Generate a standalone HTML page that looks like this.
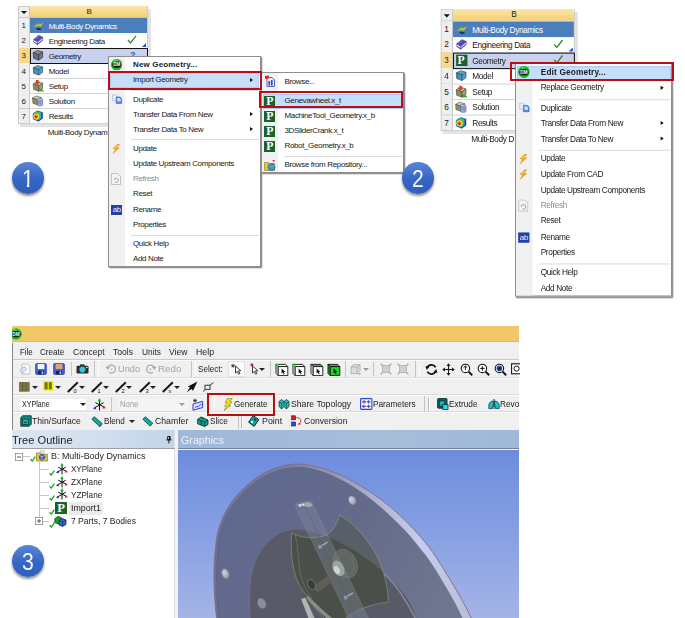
<!DOCTYPE html><html><head><meta charset="utf-8"><title>Geneva wheel import</title><style>
*{box-sizing:border-box;margin:0;padding:0}
html,body{width:685px;height:618px;background:#fff;overflow:hidden}
body{position:relative;font-family:"Liberation Sans","DejaVu Sans",sans-serif;color:#1c1c1c}
.abs{position:absolute}
.t{position:absolute;white-space:nowrap;font-size:8px;letter-spacing:-0.36px;line-height:10px;height:10px;color:#202020}
.grp{position:absolute;left:0;top:0;transform-origin:0 0}
.tbl{position:absolute;background:#fff}
.menu{position:absolute;background:#fff;border:1px solid #8e8e8e;box-shadow:1.4px 1.4px 1.2px rgba(0,0,0,.55)}
.menu .gut{position:absolute;left:0;top:0;bottom:0;width:15.6px;background:#f1f1f1}
.menu .sep{position:absolute;height:1px;background:#dcdcdc}
.hl{position:absolute;background:#c5defb;border:1px solid #aacbf2}
.red{position:absolute;border:2.6px solid #bb0d14}
.arr{position:absolute;width:0;height:0;border-left:3px solid #111;border-top:2.5px solid transparent;border-bottom:2.5px solid transparent}
.badge{position:absolute;width:31.6px;height:31.6px;border-radius:50%;background:linear-gradient(#5a85d6,#3566c4 55%,#2f5fbd);box-shadow:0 2px 2.5px rgba(60,50,30,.55);color:rgba(255,255,255,.95);font-size:24.4px;line-height:33.4px;text-align:center;font-family:"Liberation Sans",sans-serif}
.badge span{display:inline-block;transform:scaleX(.87)}
.pico{position:absolute;background:#17632b;color:#fff;font-family:"Liberation Serif",serif;font-weight:bold;text-align:center}
.app .t{font-size:9.4px;letter-spacing:-0.1px;line-height:12px;height:12px;color:#222}
</style></head><body>
<div class="grp" id="g1">
<div class="abs" style="left:20px;top:9px;width:131.0px;height:117.5px;background:#e3e3e3"></div>
<div class="abs" style="left:18px;top:6px;width:129.5px;height:117.5px;background:#fff;border:1px solid #c9c9c9"></div>
<div class="abs" style="left:18px;top:6px;width:12.4px;height:12.2px;background:#efefef;border:1px solid #c9c9c9"></div>
<div class="abs" style="left:21.2px;top:11px;width:0;height:0;border-top:3.4px solid #111;border-left:3px solid transparent;border-right:3px solid transparent"></div>
<div class="abs" style="left:30.4px;top:6px;width:117.1px;height:12.2px;background:linear-gradient(#fbe6a8,#f4cf72);border-bottom:1px solid #d9c48e"></div>
<div class="t " style="left:86.44999999999999px;top:7.40px;">B</div>
<div class="abs" style="left:18px;top:18.2px;width:12.4px;height:15.400000000000002px;background:#efefef;border:1px solid #c9c9c9;border-top:0"></div>
<div class="t " style="left:21.6px;top:21.45px;">1</div>
<div class="abs" style="left:30.4px;top:18.2px;width:117.1px;height:14.900000000000002px;background:#4a7ebd"></div>
<svg class="abs" style="left:32.2px;top:20.049999999999997px" width="12" height="11" viewBox="0 0 12 11"><ellipse cx="6.9" cy="8.9" rx="2.8" ry="1" fill="#142a66"/><path d="M4.2 1.2L8.4 4 7 5.2 10 9 5.6 6.6 6.8 5.4z" fill="#3fae3a"/><path d="M1 7.2L6 3.6 7 5 11.6 2.4 8.4 7 6.6 5.8z" fill="#f0b322"/><path d="M6.2 4.4l1.4-.6.4 1.6-1.2.6z" fill="#8ccf3a"/></svg>
<div class="t " style="left:48.7px;top:21.55px;color:#fff;">Multi-Body Dynamics</div>
<div class="abs" style="left:18px;top:33.1px;width:12.4px;height:15.5px;background:#efefef;border:1px solid #c9c9c9;border-top:0"></div>
<div class="t " style="left:21.6px;top:36.40px;">2</div>
<div class="abs" style="left:30.4px;top:47.6px;width:117.1px;height:1px;background:#d4d4d4"></div>
<svg class="abs" style="left:32.2px;top:35.0px" width="12" height="11" viewBox="0 0 12 11"><path d="M1.6 4.5L5.5 6.85V9.6L1.6 7.2z" fill="#f4f4fb" stroke="#4a44a8" stroke-width=".5"/><path d="M5.5 6.85L10.9 2.35V5L5.5 9.6z" fill="#e4e4f4" stroke="#3d3898" stroke-width=".5"/><path d="M1.7 6.9l3.8 2.4 5.3-4.5" fill="none" stroke="#3d3898" stroke-width=".9"/><path d="M1.6 4.5L6.7 .25 10.9 2.35 5.5 6.85z" fill="#4f48c0" stroke="#3a3496" stroke-width=".5"/><path d="M3.4 4L7 1.2" stroke="#7f78e4" stroke-width=".8"/></svg>
<div class="t " style="left:48.7px;top:36.50px;">Engineering Data</div>
<div class="abs" style="left:18px;top:48.1px;width:12.4px;height:15.600000000000001px;background:#f6d98a;border:1px solid #c9c9c9;border-top:0"></div>
<div class="t " style="left:21.6px;top:51.45px;">3</div>
<div class="abs" style="left:30.4px;top:47.6px;width:117.6px;height:16.1px;background:#c8d1ee;border:1.2px solid #111"></div>
<svg class="abs" style="left:32.2px;top:50.050000000000004px" width="12" height="11" viewBox="0 0 12 11"><g stroke="#2e2f31" stroke-width="0.7" stroke-linejoin="round"><path d="M1.2 2.7L5.5 .4 10.6 2 6.7 4.7z" fill="#8d8f92"/><path d="M1.2 2.7L6.7 4.7V10.1L1.6 8.2z" fill="#6c6e71"/><path d="M6.7 4.7L10.6 2V7.4L6.7 10.1z" fill="#77797c"/></g></svg>
<div class="t " style="left:48.7px;top:51.55px;">Geometry</div>
<div class="abs" style="left:18px;top:63.2px;width:12.4px;height:15.599999999999994px;background:#efefef;border:1px solid #c9c9c9;border-top:0"></div>
<div class="t " style="left:21.6px;top:66.55px;">4</div>
<div class="abs" style="left:30.4px;top:77.8px;width:117.1px;height:1px;background:#d4d4d4"></div>
<svg class="abs" style="left:32.2px;top:65.15px" width="12" height="11" viewBox="0 0 12 11"><g stroke="#1d4f6c" stroke-width="0.6" stroke-linejoin="round"><path d="M1.2 2.7L5.5 .4 10.6 2 6.7 4.7z" fill="#4d93b8"/><path d="M1.2 2.7L6.7 4.7V10.1L1.6 8.2z" fill="#2f739a"/><path d="M6.7 4.7L10.6 2V7.4L6.7 10.1z" fill="#3a80a6"/></g><path d="M3 1.8l5.6 1.9M4.4 1l5.4 1.8M3.8 3.7v5.4M8 3.9v5.4M9.4 2.9v5.4M1.4 4.6l5.3 2 3.9-2.7M1.5 6.5l5.2 1.9 3.9-2.7M5.2 4.2v5.4" stroke="#8cc4e0" stroke-width=".35" fill="none"/></svg>
<div class="t " style="left:48.7px;top:66.65px;">Model</div>
<div class="abs" style="left:18px;top:78.3px;width:12.4px;height:15.600000000000009px;background:#efefef;border:1px solid #c9c9c9;border-top:0"></div>
<div class="t " style="left:21.6px;top:81.65px;">5</div>
<div class="abs" style="left:30.4px;top:92.9px;width:117.1px;height:1px;background:#d4d4d4"></div>
<svg class="abs" style="left:32.2px;top:80.25px" width="12" height="12" viewBox="0 0 12 12"><g transform="translate(0,1.2)"><g stroke="#4c4832" stroke-width="0.6" stroke-linejoin="round"><path d="M1.2 2.7L5.5 .4 10.6 2 6.7 4.7z" fill="#cfc8a6"/><path d="M1.2 2.7L6.7 4.7V10.1L1.6 8.2z" fill="#8e8868"/><path d="M6.7 4.7L10.6 2V7.4L6.7 10.1z" fill="#a39c7a"/></g></g><path d="M4 0h2.4v2.2h1.2L5.2 5 2.8 2.2H4z" fill="#dc4a22" stroke="#9a2a0c" stroke-width=".3"/><path d="M7 8.6l1.6 2.2 1-1 1.8 1.6" stroke="#2aa81e" stroke-width="1.4" fill="none"/></svg>
<div class="t " style="left:48.7px;top:81.75px;">Setup</div>
<div class="abs" style="left:18px;top:93.4px;width:12.4px;height:15.599999999999994px;background:#efefef;border:1px solid #c9c9c9;border-top:0"></div>
<div class="t " style="left:21.6px;top:96.75px;">6</div>
<div class="abs" style="left:30.4px;top:108.0px;width:117.1px;height:1px;background:#d4d4d4"></div>
<svg class="abs" style="left:32.2px;top:95.35000000000001px" width="12" height="12" viewBox="0 0 12 12"><g transform="translate(-.6,.6) scale(.92)"><g stroke="#4c4832" stroke-width="0.6" stroke-linejoin="round"><path d="M1.2 2.7L5.5 .4 10.6 2 6.7 4.7z" fill="#cfc8a6"/><path d="M1.2 2.7L6.7 4.7V10.1L1.6 8.2z" fill="#928c6c"/><path d="M6.7 4.7L10.6 2V7.4L6.7 10.1z" fill="#a8a180"/></g></g><path d="M5.4 4.4c0-1.2 5.2-1.2 5.2 0v5.6c0 1.2-5.2 1.2-5.2 0z" fill="#94aee2" stroke="#4b68b4" stroke-width=".6"/><ellipse cx="8" cy="4.4" rx="2.6" ry=".9" fill="#c4d4f4" stroke="#4b68b4" stroke-width=".4"/><path d="M6.4 6.6h3.2M6.4 8.2h3.2" stroke="#d8607a" stroke-width=".8"/></svg>
<div class="t " style="left:48.7px;top:96.85px;">Solution</div>
<div class="abs" style="left:18px;top:108.5px;width:12.4px;height:15.5px;background:#efefef;border:1px solid #c9c9c9;border-top:0"></div>
<div class="t " style="left:21.6px;top:111.80px;">7</div>
<div class="abs" style="left:30.4px;top:123.0px;width:117.1px;height:1px;background:#d4d4d4"></div>
<svg class="abs" style="left:32.2px;top:110.4px" width="12" height="12" viewBox="0 0 12 12"><path d="M1 3.6L5.6 .8l5 1.6v6L6.4 11.4 1.2 9z" fill="#2438d0" stroke="#1a2a90" stroke-width=".4"/><path d="M1.2 3.8L5.6 1.2l3.6 1.2v5.8L6 10.6 1.4 8.6z" fill="#22b6c6"/><path d="M1.3 4L5.4 1.8l2.6 1v5L5.6 10 1.5 8.2z" fill="#3cc83a"/><ellipse cx="4.4" cy="6.4" rx="2.9" ry="3" fill="#f2e22a"/><ellipse cx="4.2" cy="6.6" rx="2" ry="2.1" fill="#f08a1c"/><ellipse cx="4.1" cy="6.8" rx="1.2" ry="1.3" fill="#dc1c1c"/></svg>
<div class="t " style="left:48.7px;top:111.90px;">Results</div>
<svg class="abs" style="left:127px;top:35.300000000000004px" width="10" height="9" viewBox="0 0 10 9"><path d="M1 5l2.5 3L9 .8" fill="none" stroke="#3d8a2a" stroke-width="1.3"/></svg>
<div class="abs" style="left:141.5px;top:42.6px;width:0;height:0;border-bottom:4px solid #2448d8;border-left:4px solid transparent"></div>
<div class="t" style="left:130px;top:50px;color:#2a5fd0;font-weight:bold;font-size:9px">?</div>
<div class="t " style="left:47.7px;top:127.60px;">Multi-Body Dynam</div>
<div class="menu" style="left:108.1px;top:55.7px;width:152.7px;height:210.9px"><div class="gut"></div>
<svg class="abs" style="left:2.0px;top:2.2px" width="11.4" height="11.4" viewBox="0 0 16 16"><circle cx="8" cy="8" r="7.7" fill="#12c41e"/><circle cx="8" cy="8" r="7.7" fill="none" stroke="#0a8a14" stroke-width=".6"/><circle cx="6.6" cy="3.4" r="2.2" fill="#6cf070" opacity=".7"/><ellipse cx="8" cy="8.2" rx="6.3" ry="4.6" fill="#1a1f1a"/><text x="8" y="10.5" font-size="6.4" font-weight="bold" text-anchor="middle" fill="#f4fff4" font-family="Liberation Sans, sans-serif">DM</text></svg>
<div class="t " style="left:23.9px;top:3.80px;font-weight:bold;letter-spacing:0.15px;">New Geometry...</div>
<div class="hl" style="left:0.5px;right:0.5px;top:16.7px;height:14.6px"></div>
<div class="t " style="left:23.9px;top:18.60px;">Import Geometry</div>
<div class="arr" style="left:140.7px;top:21.1px"></div>
<div class="sep" style="left:22px;right:1px;top:32.9px"></div>
<svg class="abs" style="left:2.8000000000000003px;top:37.400000000000006px" width="11" height="10" viewBox="0 0 11 10"><path d="M.5 .8h3.4l1.3 1.3v4.6H.5z" fill="#e3edfc" stroke="#a3bde6" stroke-width=".7"/><path d="M4.2 3h3.8l1.6 1.6v4.8H4.2z" fill="#5c8fe2" stroke="#3a6ccc" stroke-width=".7"/><path d="M5.2 4h2.2l1.2 1.2v2H5.2z" fill="#cfe0fa"/></svg>
<div class="t " style="left:23.9px;top:38.20px;">Duplicate</div>
<div class="t " style="left:23.9px;top:53.30px;">Transfer Data From New</div>
<div class="arr" style="left:140.7px;top:55.8px"></div>
<div class="t " style="left:23.9px;top:68.20px;">Transfer Data To New</div>
<div class="arr" style="left:140.7px;top:70.7px"></div>
<div class="sep" style="left:22px;right:1px;top:82.6px"></div>
<svg class="abs" style="left:3.4000000000000004px;top:87.2px" width="8" height="10" viewBox="0 0 8 10"><polygon points="5.6,0 .8,4.6 3.4,5 1,9.6 7.4,3.8 4.6,3.4 7.8,0" fill="#f2a51a" stroke="#d88a0a" stroke-width=".4"/><polygon points="5.6,.6 2.4,4 4,4.2" fill="#ffe060"/></svg>
<div class="t " style="left:23.9px;top:87.40px;">Update</div>
<div class="t " style="left:23.9px;top:102.50px;">Update Upstream Components</div>
<svg class="abs" style="left:2.2px;top:116.3px" width="10" height="12" viewBox="0 0 10 12"><path d="M.5 .5h6l3 3v8h-9z" fill="#f4f4f4" stroke="#b4b4b4" stroke-width=".8"/><path d="M3 7a2.2 2.2 0 1 1 1 2.2" fill="none" stroke="#a9a9a9" stroke-width="1"/></svg>
<div class="t " style="left:23.9px;top:117.70px;color:#8c8c8c;">Refresh</div>
<div class="t " style="left:23.9px;top:132.80px;">Reset</div>
<div class="abs" style="left:2.2px;top:147.9px;width:11px;height:10.6px;background:#2240a6;color:#f0f4ff;font-size:7.8px;line-height:9.6px;text-align:center;letter-spacing:-.3px">ab</div>
<div class="t " style="left:23.9px;top:147.90px;">Rename</div>
<div class="t " style="left:23.9px;top:162.90px;">Properties</div>
<div class="sep" style="left:22px;right:1px;top:177.9px"></div>
<div class="t " style="left:23.9px;top:181.90px;">Quick Help</div>
<div class="t " style="left:23.9px;top:197.10px;">Add Note</div>
</div>
<div class="menu" style="left:261.3px;top:72.4px;width:142.5px;height:100.6px"><div class="gut"></div>
<svg class="abs" style="left:2px;top:2.0999999999999996px" width="12" height="12" viewBox="0 0 12 12"><path d="M3 2.5h5l2.5 2.5v6.5h-7.5z" fill="#e8eefc" stroke="#3c55b8" stroke-width=".9"/><rect x="4.5" y="6" width="1.6" height="4.5" fill="#2b49c0"/><rect x="7" y="5" width="1.6" height="5.5" fill="#2b49c0"/><path d="M1 1l4-.5v3l-4 .5z" fill="#d8262c"/></svg>
<div class="t " style="left:22.2px;top:3.50px;">Browse...</div>
<div class="hl" style="left:0.5px;right:0.5px;top:20.8px;height:14.6px"></div>
<div class="pico" style="left:2px;top:22.499999999999996px;width:11.2px;height:11.2px;font-size:11.8px;line-height:11.4px">P</div>
<div class="t " style="left:22.2px;top:22.70px;">Genevawheel.x_t</div>
<div class="pico" style="left:2px;top:37.2px;width:11.2px;height:11.2px;font-size:11.8px;line-height:11.4px">P</div>
<div class="t " style="left:22.2px;top:37.40px;">MachineTool_Geometry.x_b</div>
<div class="pico" style="left:2px;top:52.300000000000004px;width:11.2px;height:11.2px;font-size:11.8px;line-height:11.4px">P</div>
<div class="t " style="left:22.2px;top:52.50px;">3DSliderCrank.x_t</div>
<div class="pico" style="left:2px;top:67.39999999999999px;width:11.2px;height:11.2px;font-size:11.8px;line-height:11.4px">P</div>
<div class="t " style="left:22.2px;top:67.60px;">Robot_Geometry.x_b</div>
<div class="sep" style="left:22px;right:1px;top:82.5px"></div>
<svg class="abs" style="left:2px;top:85.6px" width="12" height="12" viewBox="0 0 12 12"><path d="M.5 3.5h4l1 1h5v7h-10z" fill="#e8c24a" stroke="#a98312" stroke-width=".7"/><circle cx="7.5" cy="8" r="3.6" fill="#3f8fe0" stroke="#1d5fb0" stroke-width=".6"/><path d="M5.5 7c1 .2 1.5 1.2 2.5 1s1.4-1.8 2.6-1.4" stroke="#48c24e" stroke-width="1.3" fill="none"/><path d="M8 1.5l2.5-.8v2.2z" fill="#d02020"/></svg>
<div class="t " style="left:22.2px;top:87.00px;">Browse from Repository...</div>
</div>
<div class="red" style="left:107.6px;top:70.8px;width:154.2px;height:19px"></div>
<div class="red" style="left:258.6px;top:90.9px;width:144.4px;height:17.6px"></div>
</div>
<div class="grp" id="g2" style="left:422px;top:2.7px;transform:scale(1.033)">
<div class="abs" style="left:20px;top:9px;width:131.0px;height:117.5px;background:#e3e3e3"></div>
<div class="abs" style="left:18px;top:6px;width:129.5px;height:117.5px;background:#fff;border:1px solid #c9c9c9"></div>
<div class="abs" style="left:18px;top:6px;width:12.4px;height:12.2px;background:#efefef;border:1px solid #c9c9c9"></div>
<div class="abs" style="left:21.2px;top:11px;width:0;height:0;border-top:3.4px solid #111;border-left:3px solid transparent;border-right:3px solid transparent"></div>
<div class="abs" style="left:30.4px;top:6px;width:117.1px;height:12.2px;background:linear-gradient(#fbe6a8,#f4cf72);border-bottom:1px solid #d9c48e"></div>
<div class="t " style="left:86.44999999999999px;top:7.40px;">B</div>
<div class="abs" style="left:18px;top:18.2px;width:12.4px;height:15.400000000000002px;background:#efefef;border:1px solid #c9c9c9;border-top:0"></div>
<div class="t " style="left:21.6px;top:21.45px;">1</div>
<div class="abs" style="left:30.4px;top:18.2px;width:117.1px;height:14.900000000000002px;background:#4a7ebd"></div>
<svg class="abs" style="left:32.2px;top:20.049999999999997px" width="12" height="11" viewBox="0 0 12 11"><ellipse cx="6.9" cy="8.9" rx="2.8" ry="1" fill="#142a66"/><path d="M4.2 1.2L8.4 4 7 5.2 10 9 5.6 6.6 6.8 5.4z" fill="#3fae3a"/><path d="M1 7.2L6 3.6 7 5 11.6 2.4 8.4 7 6.6 5.8z" fill="#f0b322"/><path d="M6.2 4.4l1.4-.6.4 1.6-1.2.6z" fill="#8ccf3a"/></svg>
<div class="t " style="left:48.7px;top:21.55px;color:#fff;">Multi-Body Dynamics</div>
<div class="abs" style="left:18px;top:33.1px;width:12.4px;height:15.5px;background:#efefef;border:1px solid #c9c9c9;border-top:0"></div>
<div class="t " style="left:21.6px;top:36.40px;">2</div>
<div class="abs" style="left:30.4px;top:47.6px;width:117.1px;height:1px;background:#d4d4d4"></div>
<svg class="abs" style="left:32.2px;top:35.0px" width="12" height="11" viewBox="0 0 12 11"><path d="M1.6 4.5L5.5 6.85V9.6L1.6 7.2z" fill="#f4f4fb" stroke="#4a44a8" stroke-width=".5"/><path d="M5.5 6.85L10.9 2.35V5L5.5 9.6z" fill="#e4e4f4" stroke="#3d3898" stroke-width=".5"/><path d="M1.7 6.9l3.8 2.4 5.3-4.5" fill="none" stroke="#3d3898" stroke-width=".9"/><path d="M1.6 4.5L6.7 .25 10.9 2.35 5.5 6.85z" fill="#4f48c0" stroke="#3a3496" stroke-width=".5"/><path d="M3.4 4L7 1.2" stroke="#7f78e4" stroke-width=".8"/></svg>
<div class="t " style="left:48.7px;top:36.50px;">Engineering Data</div>
<div class="abs" style="left:18px;top:48.1px;width:12.4px;height:15.600000000000001px;background:#f6d98a;border:1px solid #c9c9c9;border-top:0"></div>
<div class="t " style="left:21.6px;top:51.45px;">3</div>
<div class="abs" style="left:30.4px;top:47.6px;width:117.6px;height:16.1px;background:#c8d1ee;border:1.2px solid #111"></div>
<div class="pico" style="left:32.5px;top:50.25000000000001px;width:11px;height:11px;font-size:11.6px;line-height:11.2px">P</div>
<div class="t " style="left:48.7px;top:51.55px;">Geometry</div>
<div class="abs" style="left:18px;top:63.2px;width:12.4px;height:15.599999999999994px;background:#efefef;border:1px solid #c9c9c9;border-top:0"></div>
<div class="t " style="left:21.6px;top:66.55px;">4</div>
<div class="abs" style="left:30.4px;top:77.8px;width:117.1px;height:1px;background:#d4d4d4"></div>
<svg class="abs" style="left:32.2px;top:65.15px" width="12" height="11" viewBox="0 0 12 11"><g stroke="#1d4f6c" stroke-width="0.6" stroke-linejoin="round"><path d="M1.2 2.7L5.5 .4 10.6 2 6.7 4.7z" fill="#4d93b8"/><path d="M1.2 2.7L6.7 4.7V10.1L1.6 8.2z" fill="#2f739a"/><path d="M6.7 4.7L10.6 2V7.4L6.7 10.1z" fill="#3a80a6"/></g><path d="M3 1.8l5.6 1.9M4.4 1l5.4 1.8M3.8 3.7v5.4M8 3.9v5.4M9.4 2.9v5.4M1.4 4.6l5.3 2 3.9-2.7M1.5 6.5l5.2 1.9 3.9-2.7M5.2 4.2v5.4" stroke="#8cc4e0" stroke-width=".35" fill="none"/></svg>
<div class="t " style="left:48.7px;top:66.65px;">Model</div>
<div class="abs" style="left:18px;top:78.3px;width:12.4px;height:15.600000000000009px;background:#efefef;border:1px solid #c9c9c9;border-top:0"></div>
<div class="t " style="left:21.6px;top:81.65px;">5</div>
<div class="abs" style="left:30.4px;top:92.9px;width:117.1px;height:1px;background:#d4d4d4"></div>
<svg class="abs" style="left:32.2px;top:80.25px" width="12" height="12" viewBox="0 0 12 12"><g transform="translate(0,1.2)"><g stroke="#4c4832" stroke-width="0.6" stroke-linejoin="round"><path d="M1.2 2.7L5.5 .4 10.6 2 6.7 4.7z" fill="#cfc8a6"/><path d="M1.2 2.7L6.7 4.7V10.1L1.6 8.2z" fill="#8e8868"/><path d="M6.7 4.7L10.6 2V7.4L6.7 10.1z" fill="#a39c7a"/></g></g><path d="M4 0h2.4v2.2h1.2L5.2 5 2.8 2.2H4z" fill="#dc4a22" stroke="#9a2a0c" stroke-width=".3"/><path d="M7 8.6l1.6 2.2 1-1 1.8 1.6" stroke="#2aa81e" stroke-width="1.4" fill="none"/></svg>
<div class="t " style="left:48.7px;top:81.75px;">Setup</div>
<div class="abs" style="left:18px;top:93.4px;width:12.4px;height:15.599999999999994px;background:#efefef;border:1px solid #c9c9c9;border-top:0"></div>
<div class="t " style="left:21.6px;top:96.75px;">6</div>
<div class="abs" style="left:30.4px;top:108.0px;width:117.1px;height:1px;background:#d4d4d4"></div>
<svg class="abs" style="left:32.2px;top:95.35000000000001px" width="12" height="12" viewBox="0 0 12 12"><g transform="translate(-.6,.6) scale(.92)"><g stroke="#4c4832" stroke-width="0.6" stroke-linejoin="round"><path d="M1.2 2.7L5.5 .4 10.6 2 6.7 4.7z" fill="#cfc8a6"/><path d="M1.2 2.7L6.7 4.7V10.1L1.6 8.2z" fill="#928c6c"/><path d="M6.7 4.7L10.6 2V7.4L6.7 10.1z" fill="#a8a180"/></g></g><path d="M5.4 4.4c0-1.2 5.2-1.2 5.2 0v5.6c0 1.2-5.2 1.2-5.2 0z" fill="#94aee2" stroke="#4b68b4" stroke-width=".6"/><ellipse cx="8" cy="4.4" rx="2.6" ry=".9" fill="#c4d4f4" stroke="#4b68b4" stroke-width=".4"/><path d="M6.4 6.6h3.2M6.4 8.2h3.2" stroke="#d8607a" stroke-width=".8"/></svg>
<div class="t " style="left:48.7px;top:96.85px;">Solution</div>
<div class="abs" style="left:18px;top:108.5px;width:12.4px;height:15.5px;background:#efefef;border:1px solid #c9c9c9;border-top:0"></div>
<div class="t " style="left:21.6px;top:111.80px;">7</div>
<div class="abs" style="left:30.4px;top:123.0px;width:117.1px;height:1px;background:#d4d4d4"></div>
<svg class="abs" style="left:32.2px;top:110.4px" width="12" height="12" viewBox="0 0 12 12"><path d="M1 3.6L5.6 .8l5 1.6v6L6.4 11.4 1.2 9z" fill="#2438d0" stroke="#1a2a90" stroke-width=".4"/><path d="M1.2 3.8L5.6 1.2l3.6 1.2v5.8L6 10.6 1.4 8.6z" fill="#22b6c6"/><path d="M1.3 4L5.4 1.8l2.6 1v5L5.6 10 1.5 8.2z" fill="#3cc83a"/><ellipse cx="4.4" cy="6.4" rx="2.9" ry="3" fill="#f2e22a"/><ellipse cx="4.2" cy="6.6" rx="2" ry="2.1" fill="#f08a1c"/><ellipse cx="4.1" cy="6.8" rx="1.2" ry="1.3" fill="#dc1c1c"/></svg>
<div class="t " style="left:48.7px;top:111.90px;">Results</div>
<svg class="abs" style="left:127px;top:35.300000000000004px" width="10" height="9" viewBox="0 0 10 9"><path d="M1 5l2.5 3L9 .8" fill="none" stroke="#3d8a2a" stroke-width="1.3"/></svg>
<div class="abs" style="left:141.5px;top:42.6px;width:0;height:0;border-bottom:4px solid #2448d8;border-left:4px solid transparent"></div>
<svg class="abs" style="left:127px;top:50.1px" width="10" height="9" viewBox="0 0 10 9"><path d="M1 5l2.5 3L9 .8" fill="none" stroke="#4f7a3a" stroke-width="1.3"/></svg>
<div class="t " style="left:47.7px;top:127.60px;">Multi-Body D</div>
</div>
<div class="grp" id="g2m" style="left:515.4px;top:62.2px;transform:scale(1.033)">
<div class="menu" style="left:0px;top:0px;width:152.3px;height:227.4px"><div class="gut"></div>
<div class="hl" style="left:0.5px;right:0.5px;top:2.9px;height:14.6px"></div>
<svg class="abs" style="left:2.0px;top:3.2px" width="11.4" height="11.4" viewBox="0 0 16 16"><circle cx="8" cy="8" r="7.7" fill="#12c41e"/><circle cx="8" cy="8" r="7.7" fill="none" stroke="#0a8a14" stroke-width=".6"/><circle cx="6.6" cy="3.4" r="2.2" fill="#6cf070" opacity=".7"/><ellipse cx="8" cy="8.2" rx="6.3" ry="4.6" fill="#1a1f1a"/><text x="8" y="10.5" font-size="6.4" font-weight="bold" text-anchor="middle" fill="#f4fff4" font-family="Liberation Sans, sans-serif">DM</text></svg>
<div class="t " style="left:23.9px;top:4.80px;font-weight:bold;letter-spacing:0.15px;">Edit Geometry...</div>
<div class="t " style="left:23.9px;top:19.30px;">Replace Geometry</div>
<div class="arr" style="left:140.3px;top:21.8px"></div>
<div class="sep" style="left:22px;right:1px;top:34.7px"></div>
<svg class="abs" style="left:2.8000000000000003px;top:38.0px" width="11" height="10" viewBox="0 0 11 10"><path d="M.5 .8h3.4l1.3 1.3v4.6H.5z" fill="#e3edfc" stroke="#a3bde6" stroke-width=".7"/><path d="M4.2 3h3.8l1.6 1.6v4.8H4.2z" fill="#5c8fe2" stroke="#3a6ccc" stroke-width=".7"/><path d="M5.2 4h2.2l1.2 1.2v2H5.2z" fill="#cfe0fa"/></svg>
<div class="t " style="left:23.9px;top:38.80px;">Duplicate</div>
<div class="t " style="left:23.9px;top:53.80px;">Transfer Data From New</div>
<div class="arr" style="left:140.3px;top:56.3px"></div>
<div class="t " style="left:23.9px;top:68.90px;">Transfer Data To New</div>
<div class="arr" style="left:140.3px;top:71.4px"></div>
<div class="sep" style="left:22px;right:1px;top:83.8px"></div>
<svg class="abs" style="left:3.4000000000000004px;top:88.0px" width="8" height="10" viewBox="0 0 8 10"><polygon points="5.6,0 .8,4.6 3.4,5 1,9.6 7.4,3.8 4.6,3.4 7.8,0" fill="#f2a51a" stroke="#d88a0a" stroke-width=".4"/><polygon points="5.6,.6 2.4,4 4,4.2" fill="#ffe060"/></svg>
<div class="t " style="left:23.9px;top:88.20px;">Update</div>
<svg class="abs" style="left:3.4000000000000004px;top:102.89999999999999px" width="8" height="10" viewBox="0 0 8 10"><polygon points="5.6,0 .8,4.6 3.4,5 1,9.6 7.4,3.8 4.6,3.4 7.8,0" fill="#f2a51a" stroke="#d88a0a" stroke-width=".4"/><polygon points="5.6,.6 2.4,4 4,4.2" fill="#ffe060"/></svg>
<div class="t " style="left:23.9px;top:103.10px;">Update From CAD</div>
<div class="t " style="left:23.9px;top:118.50px;">Update Upstream Components</div>
<svg class="abs" style="left:2.2px;top:131.79999999999998px" width="10" height="12" viewBox="0 0 10 12"><path d="M.5 .5h6l3 3v8h-9z" fill="#f4f4f4" stroke="#b4b4b4" stroke-width=".8"/><path d="M3 7a2.2 2.2 0 1 1 1 2.2" fill="none" stroke="#a9a9a9" stroke-width="1"/></svg>
<div class="t " style="left:23.9px;top:133.20px;color:#8c8c8c;">Refresh</div>
<div class="t " style="left:23.9px;top:148.40px;">Reset</div>
<div class="abs" style="left:2.2px;top:163.5px;width:11px;height:10.6px;background:#2240a6;color:#f0f4ff;font-size:7.8px;line-height:9.6px;text-align:center;letter-spacing:-.3px">ab</div>
<div class="t " style="left:23.9px;top:163.50px;">Rename</div>
<div class="t " style="left:23.9px;top:178.90px;">Properties</div>
<div class="sep" style="left:22px;right:1px;top:193.5px"></div>
<div class="t " style="left:23.9px;top:198.30px;">Quick Help</div>
<div class="t " style="left:23.9px;top:213.70px;">Add Note</div>
</div>
</div>
<div class="red" style="left:509.6px;top:61.6px;width:164.6px;height:19.4px"></div>
<div class="badge" style="left:12.2px;top:162.4px"><span style="clip-path:polygon(0 0,100% 0,100% 65.5%,63.5% 65.5%,63.5% 100%,42% 100%,42% 65.5%,0 65.5%)">1</span></div>
<div class="badge" style="left:402px;top:162.4px"><span>2</span></div>
<div class="abs" style="left:12px;top:326.6px;width:507px;height:291.4px;background:#f0f0f0"></div>
<div class="abs" style="left:12px;top:326.4px;width:507px;height:16px;background:#f0c869;border-bottom:1px solid #e7b952"></div>
<svg class="abs" style="left:10.4px;top:328.4px" width="12" height="12" viewBox="0 0 16 16"><circle cx="8" cy="8" r="7.7" fill="#12c41e"/><circle cx="6.6" cy="3.4" r="2.2" fill="#6cf070" opacity=".7"/><ellipse cx="8" cy="8.2" rx="6.3" ry="4.6" fill="#1a1f1a"/><text x="8" y="10.5" font-size="6.4" font-weight="bold" text-anchor="middle" fill="#f4fff4" font-family="Liberation Sans, sans-serif">DM</text></svg>
<div class="abs" style="left:0;top:326px;width:12px;height:20px;background:#fff"></div>
<div class="abs" style="left:12px;top:343px;width:1px;height:87px;background:#8a8a8a"></div>
<div class="abs" style="left:13px;top:360.2px;width:506px;height:1px;background:#fafafa"></div>
<div class="abs" style="left:13px;top:359.2px;width:506px;height:1px;background:#c9c9c9"></div>
<div class="abs" style="left:13px;top:377.8px;width:506px;height:1px;background:#fafafa"></div>
<div class="abs" style="left:13px;top:376.8px;width:506px;height:1px;background:#dcdcdc"></div>
<div class="abs" style="left:13px;top:395px;width:506px;height:1px;background:#fafafa"></div>
<div class="abs" style="left:13px;top:394px;width:506px;height:1px;background:#dcdcdc"></div>
<div class="abs" style="left:13px;top:412.4px;width:506px;height:1px;background:#fafafa"></div>
<div class="abs" style="left:13px;top:411.4px;width:506px;height:1px;background:#dcdcdc"></div>
<div class="abs" style="left:19.5px;top:345.80px;height:12px;line-height:12px;font-size:9.8px;white-space:nowrap;color:#222;transform:scaleX(0.804);transform-origin:0 50%;">File</div>
<div class="abs" style="left:40.4px;top:345.80px;height:12px;line-height:12px;font-size:9.8px;white-space:nowrap;color:#222;transform:scaleX(0.8264);transform-origin:0 50%;">Create</div>
<div class="abs" style="left:73px;top:345.80px;height:12px;line-height:12px;font-size:9.8px;white-space:nowrap;color:#222;transform:scaleX(0.8658);transform-origin:0 50%;">Concept</div>
<div class="abs" style="left:113.4px;top:345.80px;height:12px;line-height:12px;font-size:9.8px;white-space:nowrap;color:#222;transform:scaleX(0.8699);transform-origin:0 50%;">Tools</div>
<div class="abs" style="left:141.7px;top:345.80px;height:12px;line-height:12px;font-size:9.8px;white-space:nowrap;color:#222;transform:scaleX(0.8509);transform-origin:0 50%;">Units</div>
<div class="abs" style="left:169.3px;top:345.80px;height:12px;line-height:12px;font-size:9.8px;white-space:nowrap;color:#222;transform:scaleX(0.8736);transform-origin:0 50%;">View</div>
<div class="abs" style="left:195.8px;top:345.80px;height:12px;line-height:12px;font-size:9.8px;white-space:nowrap;color:#222;transform:scaleX(0.898);transform-origin:0 50%;">Help</div>
<svg class="abs" style="left:18.5px;top:363.3px" width="12" height="12" viewBox="0 0 12 12"><path d="M3 1h5.5L11 3.5V11H3z" fill="#fbfbfb" stroke="#a8a8a8" stroke-width=".7"/><path d="M1 7.2l4.5-3.6 2.4 2.6-4.6 3.6z" fill="#dfe3f7" stroke="#8d93c6" stroke-width=".6"/></svg>
<svg class="abs" style="left:35.4px;top:363.3px" width="12" height="12" viewBox="0 0 12 12"><rect x=".6" y=".6" width="10.8" height="10.8" rx="1" fill="#3e5fd2" stroke="#2a3f9e" stroke-width=".7"/><rect x="2.6" y="1" width="6.8" height="5" fill="#f4f6ff"/><rect x="3" y="8" width="6" height="3.4" fill="#1c2250"/><rect x="6.6" y="8.6" width="1.6" height="2.2" fill="#dfe6ff"/></svg>
<svg class="abs" style="left:53.2px;top:363.3px" width="12" height="12" viewBox="0 0 12 12"><rect x=".6" y=".6" width="10.8" height="10.8" rx="1" fill="#3e5fd2" stroke="#2a3f9e" stroke-width=".7"/><rect x="2.6" y="1" width="6.8" height="5" fill="#e3a079"/><rect x="3" y="8" width="6" height="3.4" fill="#1c2250"/><rect x="6.6" y="8.6" width="1.6" height="2.2" fill="#dfe6ff"/></svg>
<div class="abs" style="left:70.7px;top:362.3px;width:1px;height:14px;background:#c4c4c4"></div>
<svg class="abs" style="left:76px;top:364.3px" width="13" height="10" viewBox="0 0 13 10"><rect x=".5" y="1.8" width="12" height="7.6" rx="1.2" fill="#2b2b2b"/><rect x="4" y=".4" width="4.6" height="2" fill="#2b2b2b"/><circle cx="6.4" cy="5.6" r="3.1" fill="#35c9de" stroke="#0d6f80" stroke-width=".5"/><rect x="10" y="2.8" width="1.6" height="1.2" fill="#ddd"/></svg>
<div class="abs" style="left:93.5px;top:361.3px;width:1px;height:16px;background:#c4c4c4"></div>
<div class="abs" style="left:97.5px;top:362.8px;width:1.4px;height:13px;background:#b9b9b9;border-right:.6px solid #fff"></div>
<svg class="abs" style="left:104.6px;top:363.3px" width="12" height="12" viewBox="0 0 12 12"><path d="M2.6 6a3.9 3.9 0 1 1 1.6 3.2" fill="none" stroke="#a2a2a2" stroke-width="1.1"/><path d="M.4 3.6l2.4 3.2 2-2.8z" fill="#a2a2a2"/><circle cx="6.6" cy="6.2" r=".9" fill="#b5b5b5"/></svg>
<div class="abs" style="left:118px;top:363.30px;height:12px;line-height:12px;font-size:9.6px;white-space:nowrap;color:#a2a2a2;transform:scaleX(0.9591);transform-origin:0 50%;">Undo</div>
<svg class="abs" style="left:145.2px;top:363.3px" width="12" height="12" viewBox="0 0 12 12"><path d="M9.4 6a3.9 3.9 0 1 0-1.6 3.2" fill="none" stroke="#a2a2a2" stroke-width="1.1"/><path d="M11.6 3.6l-2.4 3.2-2-2.8z" fill="#a2a2a2"/><circle cx="5.4" cy="6.2" r=".9" fill="#b5b5b5"/></svg>
<div class="abs" style="left:157.6px;top:363.30px;height:12px;line-height:12px;font-size:9.6px;white-space:nowrap;color:#a2a2a2;transform:scaleX(1.0202);transform-origin:0 50%;">Redo</div>
<div class="abs" style="left:190.8px;top:361.3px;width:1px;height:16px;background:#c4c4c4"></div>
<div class="abs" style="left:194.6px;top:362.8px;width:1.4px;height:13px;background:#b9b9b9;border-right:.6px solid #fff"></div>
<div class="abs" style="left:198.4px;top:363.30px;height:12px;line-height:12px;font-size:9.6px;white-space:nowrap;color:#222;transform:scaleX(0.8452);transform-origin:0 50%;">Select:</div>
<div class="abs" style="left:227.6px;top:361.3px;width:17px;height:16px;background:#fbfbfb;border:1px solid #e2e2e2"></div>
<svg class="abs" style="left:230px;top:363.3px" width="13" height="12" viewBox="0 0 13 12"><path d="M5.5 3l0 7 1.8-1.6 1.4 2.8 1.2-.6-1.4-2.7 2.3-.2z" fill="#fff" stroke="#111" stroke-width=".8"/><path d="M3 .8v4M1 2.8h4M1.6 1.4l2.8 2.8M4.4 1.4L1.6 4.2" stroke="#222" stroke-width=".7"/></svg>
<svg class="abs" style="left:249px;top:363.3px" width="13" height="12" viewBox="0 0 13 12"><path d="M3.5 3l0 7 1.8-1.6 1.4 2.8 1.2-.6-1.4-2.7 2.3-.2z" fill="#fff" stroke="#111" stroke-width=".8"/><rect x="1.6" y=".6" width="2.6" height="2.6" fill="#c81e1e"/></svg>
<div class="abs" style="left:259.2px;top:368.1px;width:0;height:0;border-top:3.2px solid #222;border-left:3px solid transparent;border-right:3px solid transparent"></div>
<div class="abs" style="left:269.5px;top:361.3px;width:1px;height:16px;background:#c4c4c4"></div>
<svg class="abs" style="left:274.6px;top:362.5px" width="14" height="13.6" viewBox="0 0 14 13.6"><g stroke="#111" stroke-width=".9" stroke-linejoin="round"><path d="M1 1.4H10.6L12.8 3.6H3.2z" fill="#fff"/><path d="M1 1.4L3.2 3.6V12.6L1 10.4z" fill="#fff"/><rect x="3.2" y="3.6" width="9.6" height="9" fill="#fff"/></g><circle cx="1.8" cy="2" r="1.6" fill="#1fd02c"/><path d="M6.6 5.4v5.2l1.3-1.1.9 1.9.9-.4-.9-1.9 1.7-.1z" fill="#111"/></svg>
<svg class="abs" style="left:292.2px;top:362.5px" width="14" height="13.6" viewBox="0 0 14 13.6"><g stroke="#111" stroke-width=".9" stroke-linejoin="round"><path d="M1 1.4H10.6L12.8 3.6H3.2z" fill="#fff"/><path d="M1 1.4L3.2 3.6V12.6L1 10.4z" fill="#fff"/><rect x="3.2" y="3.6" width="9.6" height="9" fill="#fff"/></g><path d="M1 1.4L3.2 3.6" stroke="#1fd02c" stroke-width="2"/><circle cx="1.6" cy="1.8" r="1.2" fill="#1fd02c"/><path d="M6.6 5.4v5.2l1.3-1.1.9 1.9.9-.4-.9-1.9 1.7-.1z" fill="#111"/></svg>
<svg class="abs" style="left:310.2px;top:362.5px" width="14" height="13.6" viewBox="0 0 14 13.6"><g stroke="#111" stroke-width=".9" stroke-linejoin="round"><path d="M1 1.4H10.6L12.8 3.6H3.2z" fill="#1fd02c"/><path d="M1 1.4L3.2 3.6V12.6L1 10.4z" fill="#fff"/><rect x="3.2" y="3.6" width="9.6" height="9" fill="#fff"/></g><path d="M6.6 5.4v5.2l1.3-1.1.9 1.9.9-.4-.9-1.9 1.7-.1z" fill="#111"/></svg>
<svg class="abs" style="left:327.2px;top:362.5px" width="14" height="13.6" viewBox="0 0 14 13.6"><g stroke="#111" stroke-width=".9" stroke-linejoin="round"><path d="M1 1.4H10.6L12.8 3.6H3.2z" fill="#1fd02c"/><path d="M1 1.4L3.2 3.6V12.6L1 10.4z" fill="#17b424"/><rect x="3.2" y="3.6" width="9.6" height="9" fill="#1fd02c"/></g><path d="M6.6 5.4v5.2l1.3-1.1.9 1.9.9-.4-.9-1.9 1.7-.1z" fill="#111"/></svg>
<div class="abs" style="left:345.2px;top:361.3px;width:1px;height:16px;background:#c4c4c4"></div>
<svg class="abs" style="left:349.5px;top:363.3px" width="13" height="12" viewBox="0 0 13 12"><path d="M1 4l3-2.4h6v6L7 10.6H1z" fill="#dcdcdc" stroke="#a8a8a8" stroke-width=".8"/><path d="M1 4h6v6.6M7 4l3-2.4" fill="none" stroke="#a8a8a8" stroke-width=".8"/><path d="M8.5 9.5l3 1.5-3 1z" fill="#aaa"/></svg>
<div class="abs" style="left:363.3px;top:368.1px;width:0;height:0;border-top:3.2px solid #9a9a9a;border-left:3px solid transparent;border-right:3px solid transparent"></div>
<div class="abs" style="left:373.3px;top:362.3px;width:1px;height:14px;background:#c4c4c4"></div>
<svg class="abs" style="left:380px;top:363.3px" width="12" height="12" viewBox="0 0 12 12"><rect x="2.6" y="2.6" width="6.8" height="6.8" fill="#cfcfcf" stroke="#a9a9a9" stroke-width=".7"/><path d="M.6 .6l2.2 2.2M11.4 .6L9.2 2.8M.6 11.4l2.2-2.2M11.4 11.4L9.2 9.2" stroke="#9d9d9d" stroke-width="1.1"/></svg>
<svg class="abs" style="left:397px;top:363.3px" width="12" height="12" viewBox="0 0 12 12"><rect x="2.6" y="2.6" width="6.8" height="6.8" fill="#cfcfcf" stroke="#a9a9a9" stroke-width=".7"/><path d="M.6 .6l2.2 2.2M11.4 .6L9.2 2.8M.6 11.4l2.2-2.2M11.4 11.4L9.2 9.2" stroke="#9d9d9d" stroke-width="1.1"/></svg>
<div class="abs" style="left:415px;top:361.3px;width:1px;height:16px;background:#c4c4c4"></div>
<div class="abs" style="left:418.6px;top:362.8px;width:1.4px;height:13px;background:#b9b9b9;border-right:.6px solid #fff"></div>
<svg class="abs" style="left:424.5px;top:362.8px" width="13" height="13" viewBox="0 0 13 13"><path d="M10.6 4.4A4.6 4.6 0 0 0 2.2 5" fill="none" stroke="#111" stroke-width="1.7"/><path d="M.4 3.2l4 .6-2.6 3.2z" fill="#111"/><path d="M2.4 8.6A4.6 4.6 0 0 0 10.8 8" fill="none" stroke="#111" stroke-width="1.7"/><path d="M12.6 9.8l-4-.6 2.6-3.2z" fill="#111"/></svg>
<svg class="abs" style="left:442px;top:362.8px" width="13" height="13" viewBox="0 0 13 13"><path d="M6.5 2.6v7.8M2.6 6.5h7.8" stroke="#1a1a1a" stroke-width="1"/><path d="M6.5 .2l2 2.8h-4zM6.5 12.8l2-2.8h-4zM.2 6.5l2.8-2v4zM12.8 6.5l-2.8-2v4z" fill="#1a1a1a"/><circle cx="6.5" cy="6.5" r="1.1" fill="#1a1a1a"/></svg>
<svg class="abs" style="left:459.5px;top:362.8px" width="13" height="13" viewBox="0 0 13 13"><circle cx="5.4" cy="5.4" r="4.2" fill="#fff" stroke="#151515" stroke-width="1.1"/><path d="M8.6 8.6l3.6 3.6" stroke="#151515" stroke-width="2"/><path d="M5.4 3v4M3.6 4.6L5.4 3l1.8 1.6" stroke="#111" stroke-width=".9" fill="none"/></svg>
<svg class="abs" style="left:476.6px;top:362.8px" width="13" height="13" viewBox="0 0 13 13"><circle cx="5.4" cy="5.4" r="4.2" fill="#fff" stroke="#151515" stroke-width="1.1"/><path d="M8.6 8.6l3.6 3.6" stroke="#151515" stroke-width="2"/><path d="M5.4 3.2v4.4M3.2 5.4h4.4" stroke="#111" stroke-width="1"/></svg>
<svg class="abs" style="left:494px;top:362.8px" width="13" height="13" viewBox="0 0 13 13"><circle cx="5.4" cy="5.4" r="4.2" fill="#fff" stroke="#151515" stroke-width="1.1"/><path d="M8.6 8.6l3.6 3.6" stroke="#151515" stroke-width="2"/><circle cx="5.4" cy="5.4" r="2.8" fill="#2a49b8"/><circle cx="5.4" cy="5.4" r="1.2" fill="#111"/></svg>
<svg class="abs" style="left:510.5px;top:362.8px" width="9" height="13" viewBox="0 0 9 13"><rect x=".6" y=".8" width="11" height="10" fill="#fff" stroke="#151515" stroke-width="1.1"/><circle cx="5.6" cy="5.6" r="2.6" fill="none" stroke="#151515" stroke-width="1"/></svg>
<svg class="abs" style="left:19.2px;top:381.5px" width="11" height="10" viewBox="0 0 11 10"><rect x=".4" y=".4" width="9.8" height="8.8" fill="#7d7748" stroke="#5a552c" stroke-width=".6"/><path d="M3.6 .4v8.8M7 .4v8.8" stroke="#555028" stroke-width=".7"/></svg>
<div class="abs" style="left:31.6px;top:385.5px;width:0;height:0;border-top:3.2px solid #222;border-left:3px solid transparent;border-right:3px solid transparent"></div>
<svg class="abs" style="left:43.2px;top:381.3px" width="10.4" height="9.6" viewBox="0 0 10.4 9.6"><rect width="10.4" height="9.6" fill="#f2ee14"/><rect x="1.6" y="1.2" width="3" height="7.2" fill="#77711c"/><rect x="5.8" y="1.2" width="3" height="7.2" fill="#77711c"/></svg>
<div class="abs" style="left:55px;top:385.5px;width:0;height:0;border-top:3.2px solid #222;border-left:3px solid transparent;border-right:3px solid transparent"></div>
<svg class="abs" style="left:67.4px;top:380.7px" width="12" height="12" viewBox="0 0 12 12"><path d="M.8 11L10.8 1.2" stroke="#161616" stroke-width="2"/><text x="6.6" y="11.6" font-size="5.6" font-family="Liberation Sans, sans-serif" fill="#111">0</text></svg>
<div class="abs" style="left:78.9px;top:385.5px;width:0;height:0;border-top:3.2px solid #222;border-left:3px solid transparent;border-right:3px solid transparent"></div>
<svg class="abs" style="left:91px;top:380.7px" width="12" height="12" viewBox="0 0 12 12"><path d="M.8 11L10.8 1.2" stroke="#161616" stroke-width="2"/><text x="6.6" y="11.6" font-size="5.6" font-family="Liberation Sans, sans-serif" fill="#111">1</text></svg>
<div class="abs" style="left:102.5px;top:385.5px;width:0;height:0;border-top:3.2px solid #222;border-left:3px solid transparent;border-right:3px solid transparent"></div>
<svg class="abs" style="left:114.8px;top:380.7px" width="12" height="12" viewBox="0 0 12 12"><path d="M.8 11L10.8 1.2" stroke="#161616" stroke-width="2"/><text x="6.6" y="11.6" font-size="5.6" font-family="Liberation Sans, sans-serif" fill="#111">2</text></svg>
<div class="abs" style="left:126.30000000000001px;top:385.5px;width:0;height:0;border-top:3.2px solid #222;border-left:3px solid transparent;border-right:3px solid transparent"></div>
<svg class="abs" style="left:138.8px;top:380.7px" width="12" height="12" viewBox="0 0 12 12"><path d="M.8 11L10.8 1.2" stroke="#161616" stroke-width="2"/><text x="6.6" y="11.6" font-size="5.6" font-family="Liberation Sans, sans-serif" fill="#111">3</text></svg>
<div class="abs" style="left:150.3px;top:385.5px;width:0;height:0;border-top:3.2px solid #222;border-left:3px solid transparent;border-right:3px solid transparent"></div>
<svg class="abs" style="left:162.4px;top:380.7px" width="12" height="12" viewBox="0 0 12 12"><path d="M.8 11L10.8 1.2" stroke="#161616" stroke-width="2"/><text x="6.6" y="11.6" font-size="5.6" font-family="Liberation Sans, sans-serif" fill="#111">x</text></svg>
<div class="abs" style="left:173.9px;top:385.5px;width:0;height:0;border-top:3.2px solid #222;border-left:3px solid transparent;border-right:3px solid transparent"></div>
<svg class="abs" style="left:186px;top:380.7px" width="12" height="12" viewBox="0 0 12 12"><path d="M.8 11.2L4 6.6 2 5.4 11.4.6 7 9.8 5.4 8z" fill="#0c0c0c"/></svg>
<svg class="abs" style="left:203.4px;top:381.7px" width="11" height="10" viewBox="0 0 11 10"><rect x="2" y="3.2" width="5" height="4.2" fill="none" stroke="#222" stroke-width=".9"/><path d="M7 3.2L10.4.6M.4 9.6L2 7.4" stroke="#222" stroke-width=".9"/></svg>
<div class="abs" style="left:19.4px;top:398.0px;width:68px;height:12.6px;background:#fff;border:1px solid #eeeeee"></div>
<div class="abs" style="left:22.4px;top:398.20px;height:12px;line-height:12px;font-size:8.4px;white-space:nowrap;color:#222;transform:scaleX(0.8468);transform-origin:0 50%;">XYPlane</div>
<div class="abs" style="left:80px;top:403.0px;width:0;height:0;border-top:3.2px solid #222;border-left:3px solid transparent;border-right:3px solid transparent"></div>
<svg class="abs" style="left:93.4px;top:397.7px" width="13" height="13" viewBox="0 0 13 13"><path d="M6.5 1.6V12.4M2.4 4.6l8.6 4.4M10.6 4.6l-8.6 5" stroke="#111" stroke-width="1"/><path d="M6.5 0l1.8 3.2H4.7z" fill="#17b024"/><path d="M13 10.2l-3.6.4 1.4-2.8z" fill="#e01818"/><path d="M0 10.8l3.4.6-1.4-2.8z" fill="#2030d8"/></svg>
<div class="abs" style="left:110.5px;top:396.7px;width:1px;height:15px;background:#c4c4c4"></div>
<div class="abs" style="left:117.6px;top:398.0px;width:71px;height:12.6px;background:#f5f5f5;border:1px solid #efefef"></div>
<div class="abs" style="left:120px;top:398.20px;height:12px;line-height:12px;font-size:8.6px;white-space:nowrap;color:#9b9b9b;transform:scaleX(0.9004);transform-origin:0 50%;">None</div>
<div class="abs" style="left:179px;top:403.0px;width:0;height:0;border-top:3.2px solid #9e9e9e;border-left:3px solid transparent;border-right:3px solid transparent"></div>
<svg class="abs" style="left:192px;top:397.7px" width="12" height="13" viewBox="0 0 12 13"><path d="M1 6l9.6-2.6v6.2L1 12.2z" fill="#dfe5ff" stroke="#2a3fe0" stroke-width="1"/><path d="M3 9.6c1.4-2.4 2.6.6 4-1.6s2-1 2.6-1.4" fill="none" stroke="#2a3fe0" stroke-width=".9"/><path d="M3 .6v4M1 2.6h4M1.6 1.2l2.8 2.8M4.4 1.2L1.6 4" stroke="#222" stroke-width=".7"/></svg>
<div class="abs" style="left:214px;top:397.7px;width:1.4px;height:13px;background:#b9b9b9;border-right:.6px solid #fff"></div>
<svg class="abs" style="left:222.5px;top:397.7px" width="10" height="13" viewBox="0 0 10 13"><polygon points="4.2,.4 9.4,.4 6.6,3.8 9,4 5.4,7.4 7.6,7.6 1,12.6 3.6,8.4 1.4,8.2 4.4,5 2.2,4.8" fill="#f7e01c" stroke="#7d6c0c" stroke-width=".55" stroke-linejoin="round"/></svg>
<div class="abs" style="left:234.2px;top:398.20px;height:12px;line-height:12px;font-size:9.6px;white-space:nowrap;color:#222;transform:scaleX(0.8347);transform-origin:0 50%;">Generate</div>
<svg class="abs" style="left:277.5px;top:398.2px" width="12" height="12" viewBox="0 0 12 12"><path d="M1 3.5l2.6-2 2.4 2 2.4-2 2.6 2v5L8.4 11 6 8.6 3.6 11 1 8.5z" fill="#38b6b0" stroke="#0d4a48" stroke-width=".8"/><path d="M1 3.5l2.6 2 2.4-2 2.4 2 2.6-2M3.6 5.5V11M8.4 5.5V11M6 3.5v5" fill="none" stroke="#0d4a48" stroke-width=".7"/></svg>
<div class="abs" style="left:290.6px;top:398.20px;height:12px;line-height:12px;font-size:9.6px;white-space:nowrap;color:#222;transform:scaleX(0.9053);transform-origin:0 50%;">Share Topology</div>
<svg class="abs" style="left:360.2px;top:398.2px" width="12.5" height="12" viewBox="0 0 12.5 12"><rect x=".6" y=".6" width="11.3" height="10.8" rx=".8" fill="#f2f5ff" stroke="#2e46c8" stroke-width="1.1"/><path d="M2 3.8h4M6.6 8.4h4" stroke="#e02424" stroke-width="1.3"/><path d="M6.8 3.8h3.6M2 8.4h3.6" stroke="#2e46c8" stroke-width="1.3"/><path d="M4 2v3.6M8.6 6.6v3.6M8.6 2.2v3.2M3.8 6.8v3.2" stroke="#2e46c8" stroke-width=".9"/></svg>
<div class="abs" style="left:373.3px;top:398.20px;height:12px;line-height:12px;font-size:9.6px;white-space:nowrap;color:#222;transform:scaleX(0.861);transform-origin:0 50%;">Parameters</div>
<div class="abs" style="left:424.4px;top:396.2px;width:1px;height:16px;background:#c4c4c4"></div>
<div class="abs" style="left:428.4px;top:397.7px;width:1.4px;height:13px;background:#b9b9b9;border-right:.6px solid #fff"></div>
<svg class="abs" style="left:437px;top:398.2px" width="12" height="12" viewBox="0 0 12 12"><rect x=".6" y=".6" width="9.4" height="9.6" rx=".8" fill="#0d5e62" stroke="#062c30" stroke-width=".9"/><rect x="2.6" y="3" width="5" height="5" fill="#18b8c0" stroke="#062c30" stroke-width=".6"/><rect x="5.8" y="6.4" width="5.2" height="5" fill="#2adce4" stroke="#062c30" stroke-width=".8"/></svg>
<div class="abs" style="left:449.3px;top:398.20px;height:12px;line-height:12px;font-size:9.6px;white-space:nowrap;color:#222;transform:scaleX(0.8646);transform-origin:0 50%;">Extrude</div>
<svg class="abs" style="left:488px;top:398.2px" width="12" height="12" viewBox="0 0 12 12"><path d="M6 1v10" stroke="#111" stroke-width=".9"/><path d="M5.4 3C2 3 .8 5.6.8 8v2.6h3.6V8.4h1z" fill="#1cc2ca" stroke="#07433f" stroke-width=".8"/><path d="M6.6 3c3.4 0 4.6 2.6 4.6 5v2.6H7.6V8.4h-1z" fill="#1cc2ca" stroke="#07433f" stroke-width=".8"/></svg>
<div class="abs" style="left:500.2px;top:398.20px;height:12px;line-height:12px;font-size:9.6px;white-space:nowrap;color:#222;transform:scaleX(0.86);transform-origin:0 50%;">Revo</div>
<svg class="abs" style="left:19.6px;top:415.4px" width="12" height="12" viewBox="0 0 12 12"><path d="M.8 2.6l2-1.8h8.4v8.4l-2 2H.8z" fill="#0e8f86" stroke="#06332f" stroke-width=".9"/><rect x="2.6" y="4" width="6" height="5.4" fill="#15b3a7" stroke="#06332f" stroke-width=".7"/><path d="M4 7.4h3" stroke="#06332f" stroke-width=".8"/></svg>
<div class="abs" style="left:32.4px;top:415.40px;height:12px;line-height:12px;font-size:9.6px;white-space:nowrap;color:#222;transform:scaleX(0.897);transform-origin:0 50%;">Thin/Surface</div>
<svg class="abs" style="left:91.4px;top:415.9px" width="11.5" height="11" viewBox="0 0 11.5 11"><path d="M.8 3.2L3.4.8l7.4 6.4-2.2 3.2z" fill="#16a99d" stroke="#07433f" stroke-width=".8"/><path d="M8.6 10.4c1.6-.2 2.4-1.6 2.2-3.2" fill="none" stroke="#07433f" stroke-width=".8"/></svg>
<div class="abs" style="left:103.9px;top:415.40px;height:12px;line-height:12px;font-size:9.6px;white-space:nowrap;color:#222;transform:scaleX(0.8514);transform-origin:0 50%;">Blend</div>
<div class="abs" style="left:129.2px;top:420.2px;width:0;height:0;border-top:3.2px solid #222;border-left:3px solid transparent;border-right:3px solid transparent"></div>
<svg class="abs" style="left:142px;top:415.9px" width="11.5" height="11" viewBox="0 0 11.5 11"><path d="M.8 3.2L3.4.8l7.4 6.4-2.6 3z" fill="#16a99d" stroke="#07433f" stroke-width=".8"/></svg>
<div class="abs" style="left:154.5px;top:415.40px;height:12px;line-height:12px;font-size:9.6px;white-space:nowrap;color:#222;transform:scaleX(0.905);transform-origin:0 50%;">Chamfer</div>
<svg class="abs" style="left:197px;top:415.9px" width="11.5" height="11" viewBox="0 0 11.5 11"><path d="M.6 3.4L4 1l7 3v4.6L7.6 10.6.6 7.8z" fill="#0f9a90" stroke="#06332f" stroke-width=".8"/><path d="M.6 3.4l7 2.8 3.4-2.2M7.6 6.2v4.4M4.2 4.8v4.4M3.8 1.2l3.4 1.4" fill="none" stroke="#06332f" stroke-width=".7"/></svg>
<div class="abs" style="left:210.3px;top:415.40px;height:12px;line-height:12px;font-size:9.6px;white-space:nowrap;color:#222;transform:scaleX(0.8559);transform-origin:0 50%;">Slice</div>
<div class="abs" style="left:237.6px;top:413.9px;width:1px;height:15px;background:#c4c4c4"></div>
<div class="abs" style="left:241.2px;top:414.9px;width:1.4px;height:13px;background:#b9b9b9;border-right:.6px solid #fff"></div>
<svg class="abs" style="left:248.2px;top:415.4px" width="11.5" height="12" viewBox="0 0 11.5 12"><path d="M5.2.6l5.6 4-4.6 6.8L.6 7.2z" fill="#11a298" stroke="#141414" stroke-width=".9"/><circle cx="4" cy="7" r="1.2" fill="#e8ffff"/><circle cx="7" cy="4.6" r="1.1" fill="#0a3e3a"/></svg>
<div class="abs" style="left:261.7px;top:415.40px;height:12px;line-height:12px;font-size:9.6px;white-space:nowrap;color:#222;transform:scaleX(0.9189);transform-origin:0 50%;">Point</div>
<svg class="abs" style="left:291px;top:415.4px" width="12" height="12" viewBox="0 0 12 12"><rect x=".6" y=".8" width="4" height="4" fill="#d32020" stroke="#222" stroke-width=".6"/><rect x=".6" y="7" width="4" height="4" fill="#2a4fd0" stroke="#222" stroke-width=".6"/><path d="M5.4 2.6c4.4 0 5.4 3 3.4 6.2" fill="none" stroke="#c22" stroke-width=".9"/><path d="M9.8 9.8L6.6 9.6l1.8-2.2z" fill="#c22"/></svg>
<div class="abs" style="left:303.9px;top:415.40px;height:12px;line-height:12px;font-size:9.6px;white-space:nowrap;color:#222;transform:scaleX(0.8943);transform-origin:0 50%;">Conversion</div>
<div class="abs" style="left:207.1px;top:393.3px;width:68.3px;height:22.4px;border:2.8px solid #bb0d14"></div>
<div class="abs" style="left:12px;top:429.6px;width:162.6px;height:18.4px;background:linear-gradient(90deg,#dce6f2,#d2dfee 50%,#c3d5ea);border-bottom:0"></div>
<div class="abs" style="left:12.3px;top:433.80px;height:12px;line-height:12px;font-size:11.6px;white-space:nowrap;color:#1e1e1e;transform:scaleX(0.9578);transform-origin:0 50%;">Tree Outline</div>
<svg class="abs" style="left:165.6px;top:435.8px" width="6" height="8" viewBox="0 0 6 8"><path d="M1.6 .5h2.6v3.2H1.6z" fill="#fff" stroke="#111" stroke-width=".9"/><path d="M3.4 .6v3" stroke="#111" stroke-width="1.2"/><path d="M.4 3.9h5.2M2.9 4V7.4" stroke="#111" stroke-width="1"/></svg>
<div class="abs" style="left:12px;top:448.6px;width:162px;height:170px;background:#fff"></div>
<div class="abs" style="left:174.4px;top:429.6px;width:3.4px;height:189px;background:#f3f3f3;border-left:1px solid #dedede"></div>
<div class="abs" style="left:12px;top:447.9px;width:162.6px;height:1.3px;background:linear-gradient(#8e8e8e,#b4b4b4)"></div>
<div class="abs" style="left:177.5px;top:429.6px;width:341.5px;height:19.4px;background:linear-gradient(90deg,#9fb7d9,#a7bedb 60%,#9fb8d8);border-bottom:1.2px solid #7a8088"></div>
<div class="abs" style="left:180.6px;top:434.10px;height:12px;line-height:12px;font-size:11.8px;white-space:nowrap;color:#eef3fa;transform:scaleX(0.9064);transform-origin:0 50%;">Graphics</div>
<svg class="abs" style="left:177.5px;top:449.6px" width="341.5" height="168.39999999999998" viewBox="177.5 449.6 341.5 168.39999999999998">
<defs>
<linearGradient id="bg" x1="0" y1="0" x2="0" y2="1"><stop offset="0" stop-color="#6b8cde"/><stop offset="1" stop-color="#a4b4e7"/></linearGradient>
<linearGradient id="rim" gradientUnits="userSpaceOnUse" x1="215" y1="560" x2="470" y2="560"><stop offset="0" stop-color="#6c6f95"/><stop offset=".3" stop-color="#7c7da2"/><stop offset=".55" stop-color="#a4a4c2"/><stop offset=".8" stop-color="#c6cdee"/><stop offset="1" stop-color="#b9bedb"/></linearGradient>
<linearGradient id="disc" gradientUnits="userSpaceOnUse" x1="230" y1="470" x2="450" y2="620"><stop offset="0" stop-color="#5f688f"/><stop offset=".5" stop-color="#656b8b"/><stop offset="1" stop-color="#71768f"/></linearGradient>
<radialGradient id="pin" cx=".4" cy=".35" r=".7"><stop offset="0" stop-color="#d4d4e0"/><stop offset="1" stop-color="#8c8ea6"/></radialGradient>
<filter id="b1"><feGaussianBlur stdDeviation=".55"/></filter>
<clipPath id="inner"><path d="M252 640 C248 610 248 585 252 570 C256 553 266 540 280 532 C290 527.6 300 528 312 531 C330 536 350 546 366 558 C380 568 392 579 404 594 C410 602 414 610 420 630 Z"/></clipPath>
</defs>
<rect x="177.5" y="449.6" width="341.5" height="168.39999999999998" fill="url(#bg)"/>
<g filter="url(#b1)">
<path d="M219.5 640 C212 600 212 560 217 533 C224 505 240 489 257 476.5 C270 468 283 464.5 295 463.6 C312 463.4 330 470 345 477 C362 486 376 495 390 506.6 C402 517 412 527 421 537.6 C430 548 436 557 441.8 566.6 C449 578 455 588 460.4 597.7 C465 606 469 613 476 630 Z" fill="url(#rim)" stroke="#7a6f80" stroke-width=".9"/>
<path d="M221.5 640 C214.6 600 215 561 219.4 535 C226 508 242 491.4 258.4 479.4 C271 471.2 284 467.4 296 466.8 C312 466.8 328 473 342 480.4 C360 490 375 502 390 516 C402 527 412 538 421 550 C430 561 436 571 441.8 581 C447 590 452 598 456 606 C460 614 463 620 468 635 Z" fill="url(#disc)" stroke="#555a78" stroke-width=".5"/>
<path d="M252 640 C248 610 248 585 252 570 C256 553 266 540 280 532 C290 527.6 300 528 312 531 C330 536 350 546 366 558 C380 568 392 579 404 594 C410 602 414 610 420 630 Z" fill="#585a68" stroke="#6f7286" stroke-width=".7"/>
<path d="M383.5 572.8 C396 585 406 600 414.8 618" fill="none" stroke="#878a9a" stroke-width="1.5"/>
<path d="M291.4 532.4 C300 538 313 539 326.6 534.5 C333 530 337 522 339 514.4 C352 522 362 533 369 543.8 C376 553 380 562 382.5 570.7 C386 582 387.6 592 387.7 601.8 C372 603 352 610 340 622 L327.6 622 C318 612 311 604 307 595.6 C300 588 296 580 294.5 572.8 C291 560 290 546 291.4 532.4 Z" fill="rgba(72,80,58,.44)" stroke="#7d9277" stroke-width=".9"/>
<path d="M291.4 532.4 C300 538 313 539 326.6 534.5 C333 530 337 522 339 514.4 C352 522 362 533 369 543.8 C376 553 380 562 382.5 570.7 C386 582 387.6 592 387.7 601.8 C372 603 352 610 340 622 L327.6 622 C318 612 311 604 307 595.6 C300 588 296 580 294.5 572.8 C291 560 290 546 291.4 532.4 Z" fill="rgba(60,63,46,.28)" clip-path="url(#inner)"/>
<path d="M294.6 533.8 C298 548 298 562 300 574 C303 586 310 598 318 608" fill="none" stroke="#6f846c" stroke-width=".6"/>
<path d="M295 506 C295 503 298 501.6 301 501.8 L307 500.6 C310 500 312.4 501.6 312.6 504.4 L370 622 L350 622 Z" fill="rgba(128,136,156,.4)" stroke="rgba(150,160,176,.5)" stroke-width=".5"/>
<path d="M303 502.4 L358 622" stroke="rgba(80,88,104,.7)" stroke-width=".6" fill="none"/>
<path d="M295.6 504.4 l10-2.4 c3-.8 6 .6 6.6 3 l-3.4 1.8z" fill="#9eaaa8"/>
<circle cx="299.6" cy="505.2" r="1.3" fill="#d9e0e0"/><circle cx="302.6" cy="504.2" r="1" fill="#e6ecec"/>
<path d="M312 586 L333 571 L336 578 L317 592Z" fill="#66675f" opacity=".7"/>
<ellipse cx="345" cy="563" rx="11" ry="15" transform="rotate(-28 345 563)" fill="rgba(112,120,116,.55)" stroke="rgba(150,160,150,.6)" stroke-width=".5"/>
<ellipse cx="345" cy="563" rx="7.6" ry="11" transform="rotate(-28 345 563)" fill="none" stroke="rgba(160,170,164,.5)" stroke-width=".6" stroke-dasharray="1.4 1.2"/>
<ellipse cx="338" cy="568" rx="5.4" ry="8.4" transform="rotate(-28 338 568)" fill="#99a3a0"/>
<ellipse cx="336.2" cy="569.6" rx="2.8" ry="4.4" transform="rotate(-28 336.2 569.6)" fill="#ccd3d1"/>
<circle cx="319.6" cy="546.4" r="2.1" fill="#7f97b6"/><circle cx="345.2" cy="597.2" r="2.1" fill="#7f97b6"/>
<path d="M321.6 545l5.4-3.2M347.2 595.6l5.4-3.2" stroke="#a4a9ac" stroke-width="1.5"/>
<ellipse cx="311" cy="584.2" rx="3.6" ry="5.4" transform="rotate(-24 311 584.2)" fill="#3a3c39" stroke="#6f8870" stroke-width=".7"/>
<path d="M300.6 598.6 L304.8 597.4 L316 622 L309.6 622Z" fill="#b4b5b1"/>
<path d="M307.6 595.4 C316 604 323 611 333 618.6 L330 621 C320 613 312.6 606 305.6 597.4Z" fill="#8b8e88"/>
<ellipse cx="225" cy="573.4" rx="3.7" ry="5.2" transform="rotate(-20 225 573.4)" fill="url(#pin)" stroke="#86726c" stroke-width=".6"/>
<ellipse cx="261.2" cy="603" rx="4" ry="5.4" transform="rotate(-25 261.2 603)" fill="#8c8e9e"/>
<ellipse cx="351.8" cy="500" rx="3.7" ry="4.8" transform="rotate(-25 351.8 500)" fill="url(#pin)" stroke="#77788c" stroke-width=".5"/>
</g>
</svg>
<div class="abs" style="left:39px;top:462px;width:0;height:59px;border-left:1px solid #c6c6c6"></div>
<div class="abs" style="left:23px;top:455.9px;width:7px;height:0;border-top:1px solid #c6c6c6"></div>
<div class="abs" style="left:40px;top:469px;width:9px;height:0;border-top:1px solid #c6c6c6"></div>
<div class="abs" style="left:40px;top:482px;width:9px;height:0;border-top:1px solid #c6c6c6"></div>
<div class="abs" style="left:40px;top:494.8px;width:9px;height:0;border-top:1px solid #c6c6c6"></div>
<div class="abs" style="left:40px;top:508.2px;width:9px;height:0;border-top:1px solid #c6c6c6"></div>
<div class="abs" style="left:43px;top:520.7px;width:6px;height:0;border-top:1px solid #c6c6c6"></div>
<svg class="abs" style="left:15.4px;top:452.5px" width="8" height="8" viewBox="0 0 8 8"><rect x=".4" y=".4" width="7.2" height="7.2" fill="#fff" stroke="#8c8c8c" stroke-width=".8"/><path d="M2 4h4" stroke="#333" stroke-width=".8"/></svg>
<svg class="abs" style="left:29.6px;top:456.29999999999995px" width="6" height="6" viewBox="0 0 6 6"><path d="M.6 3.2l1.6 2L5.4.6" fill="none" stroke="#18a018" stroke-width="1.2"/></svg>
<svg class="abs" style="left:36px;top:449.5px" width="12" height="12" viewBox="0 0 12 12"><path d="M.6 3h4l1 1.2h5.8V11H.6z" fill="#e9c84c" stroke="#8a6d14" stroke-width=".7"/><path d="M3.4 5.6L6 4.2l2.8 1.2v3L6 10 3.4 8.6z" fill="#3b66d8" stroke="#16308a" stroke-width=".6"/><path d="M3.4 5.6L6 6.8l2.8-1.4M6 6.8V10" fill="none" stroke="#dfe8ff" stroke-width=".5"/><path d="M4 .4h4.4v2H4z" fill="#f4f4f4" stroke="#999" stroke-width=".4"/></svg>
<div class="abs" style="left:51px;top:449.90px;height:12px;line-height:12px;font-size:9px;white-space:nowrap;color:#1e1e1e;transform:scaleX(0.9892);transform-origin:0 50%;">B: Multi-Body Dynamics</div>
<svg class="abs" style="left:49px;top:469.6px" width="6" height="6" viewBox="0 0 6 6"><path d="M.6 3.2l1.6 2L5.4.6" fill="none" stroke="#18a018" stroke-width="1.2"/></svg>
<svg class="abs" style="left:56px;top:462.6px" width="12" height="12" viewBox="0 0 12 12"><path d="M6 1.6V11.4M2.2 4.2l8 4M9.8 4.2l-8 4.6" stroke="#111" stroke-width="1"/><path d="M6 0l1.7 3H4.3z" fill="#17b024"/><path d="M12 9.2l-3.4.4 1.3-2.6z" fill="#e01818"/><path d="M0 9.8l3.2.6-1.4-2.6z" fill="#2030d8"/></svg>
<div class="abs" style="left:70.6px;top:463.00px;height:12px;line-height:12px;font-size:9px;white-space:nowrap;color:#1e1e1e;transform:scaleX(0.8906);transform-origin:0 50%;">XYPlane</div>
<svg class="abs" style="left:49px;top:482.6px" width="6" height="6" viewBox="0 0 6 6"><path d="M.6 3.2l1.6 2L5.4.6" fill="none" stroke="#18a018" stroke-width="1.2"/></svg>
<svg class="abs" style="left:56px;top:475.6px" width="12" height="12" viewBox="0 0 12 12"><path d="M6 1.6V11.4M2.2 4.2l8 4M9.8 4.2l-8 4.6" stroke="#111" stroke-width="1"/><path d="M6 0l1.7 3H4.3z" fill="#17b024"/><path d="M12 9.2l-3.4.4 1.3-2.6z" fill="#e01818"/><path d="M0 9.8l3.2.6-1.4-2.6z" fill="#2030d8"/></svg>
<div class="abs" style="left:70.6px;top:476.00px;height:12px;line-height:12px;font-size:9px;white-space:nowrap;color:#1e1e1e;transform:scaleX(0.9035);transform-origin:0 50%;">ZXPlane</div>
<svg class="abs" style="left:49px;top:495.40000000000003px" width="6" height="6" viewBox="0 0 6 6"><path d="M.6 3.2l1.6 2L5.4.6" fill="none" stroke="#18a018" stroke-width="1.2"/></svg>
<svg class="abs" style="left:56px;top:488.40000000000003px" width="12" height="12" viewBox="0 0 12 12"><path d="M6 1.6V11.4M2.2 4.2l8 4M9.8 4.2l-8 4.6" stroke="#111" stroke-width="1"/><path d="M6 0l1.7 3H4.3z" fill="#17b024"/><path d="M12 9.2l-3.4.4 1.3-2.6z" fill="#e01818"/><path d="M0 9.8l3.2.6-1.4-2.6z" fill="#2030d8"/></svg>
<div class="abs" style="left:70.6px;top:488.80px;height:12px;line-height:12px;font-size:9px;white-space:nowrap;color:#1e1e1e;transform:scaleX(0.9035);transform-origin:0 50%;">YZPlane</div>
<svg class="abs" style="left:49px;top:509.0px" width="6" height="6" viewBox="0 0 6 6"><path d="M.6 3.2l1.6 2L5.4.6" fill="none" stroke="#18a018" stroke-width="1.2"/></svg>
<div class="pico" style="left:55px;top:502.0px;width:12px;height:12px;font-size:12.6px;line-height:12.2px">P</div>
<div class="abs" style="left:68.6px;top:501.59999999999997px;width:34.6px;height:13px;background:#ececec"></div>
<div class="abs" style="left:70.6px;top:502.20px;height:12px;line-height:12px;font-size:9px;white-space:nowrap;color:#1e1e1e;transform:scaleX(0.9831);transform-origin:0 50%;">Import1</div>
<svg class="abs" style="left:35.0px;top:517.3000000000001px" width="8" height="8" viewBox="0 0 8 8"><rect x=".4" y=".4" width="7.2" height="7.2" fill="#fff" stroke="#8c8c8c" stroke-width=".8"/><path d="M2 4h4" stroke="#333" stroke-width=".8"/><path d="M4 2v4" stroke="#333" stroke-width=".8"/></svg>
<svg class="abs" style="left:49px;top:521.5px" width="6" height="6" viewBox="0 0 6 6"><path d="M.6 3.2l1.6 2L5.4.6" fill="none" stroke="#18a018" stroke-width="1.2"/></svg>
<svg class="abs" style="left:54.4px;top:514.5px" width="13" height="12" viewBox="0 0 13 12"><path d="M.8 3.6L4 1.4l3.4 1.2v4L4.2 9 .8 7.6z" fill="#1f9a2e" stroke="#0b3d12" stroke-width=".7"/><path d="M5 5.6L8.4 3.6l3.6 1.4v4.4L8.6 11.4 5 10z" fill="#2f66d0" stroke="#0d235e" stroke-width=".8"/><path d="M5 5.6l3.6 1.6L12 5M8.6 7.2v4.2" fill="none" stroke="#0d235e" stroke-width=".6"/></svg>
<div class="abs" style="left:70.6px;top:514.70px;height:12px;line-height:12px;font-size:9px;white-space:nowrap;color:#1e1e1e;transform:scaleX(0.9468);transform-origin:0 50%;">7 Parts, 7 Bodies</div>
<div class="badge" style="left:12.2px;top:545px"><span>3</span></div>
</body></html>
